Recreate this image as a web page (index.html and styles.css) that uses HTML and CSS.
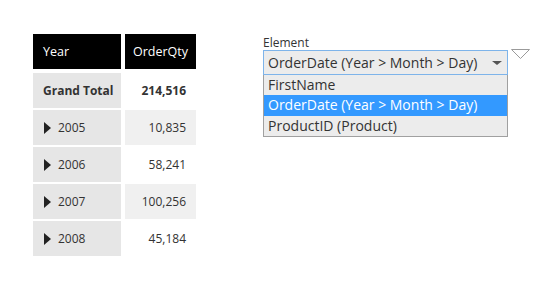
FILE: index.html
```html
<!DOCTYPE html>
<html>
<head>
<meta charset="utf-8">
<link rel="stylesheet" href="styles.css">
</head>
<body>
<div class="page">
  <div class="pivot">
    <div class="row head">
      <div class="cell hdr">Year</div>
      <div class="cell hdr val">OrderQty</div>
    </div>
    <div class="row total">
      <div class="cell lab">Grand Total</div>
      <div class="cell val">214,516</div>
    </div>
    <div class="row">
      <div class="cell lab"><span class="tri"></span>2005</div>
      <div class="cell val alt">10,835</div>
    </div>
    <div class="row">
      <div class="cell lab"><span class="tri"></span>2006</div>
      <div class="cell val">58,241</div>
    </div>
    <div class="row">
      <div class="cell lab"><span class="tri"></span>2007</div>
      <div class="cell val alt">100,256</div>
    </div>
    <div class="row">
      <div class="cell lab"><span class="tri"></span>2008</div>
      <div class="cell val">45,184</div>
    </div>
  </div>
  <div class="picker">
    <div class="label">Element</div>
    <div class="combo">
      <div class="select">
        <span>OrderDate (Year &gt; Month &gt; Day)</span>
        <span class="arrow"></span>
      </div>
      <svg class="outline" width="19" height="10" viewBox="0 0 19 10"><path d="M0.5 0.5 H18.5 L9.5 9.5 Z" fill="none" stroke="#9a9a9a" stroke-width="1"/></svg>
    </div>
    <div class="list">
      <div class="opt">FirstName</div>
      <div class="opt sel">OrderDate (Year &gt; Month &gt; Day)</div>
      <div class="opt">ProductID (Product)</div>
    </div>
  </div>
</div>
</body>
</html>
```
FILE: styles.css
```css
html, body { margin: 0; padding: 0; background: #fff; }
body { font-family: "Open Sans", "Noto Sans", sans-serif; color: #333; }
.page { display: flex; padding: 34px 0 0 33px; }
.pivot { display: flex; flex-direction: column; gap: 2px; width: 163px; }
.row { display: flex; gap: 4px; height: 35px; }
.row.head { margin-bottom: 2px; }
.cell { display: flex; align-items: center; font-size: 12px; box-sizing: border-box; }
.cell.hdr { background: #000; color: #fff; width: 88px; padding-left: 10px; font-size: 12.5px; }
.cell.hdr.val { width: 71px; padding: 0; justify-content: center; }
.cell.lab { background: #e6e6e6; width: 88px; padding-left: 10px; }
.total .cell { font-weight: bold; }
.cell.val { width: 71px; justify-content: flex-end; padding-right: 10px; }
.cell.alt { background: #f0f0f0; }
.tri { width: 0; height: 0; border-top: 6px solid transparent; border-bottom: 6px solid transparent; border-left: 7px solid #222; margin: 0 7px 0 1px; }
.picker { margin-left: 67px; margin-top: 2px; width: 245px; }
.label { font-size: 12px; color: #333; height: 14px; line-height: 14px; }
.combo { position: relative; }
.select { box-sizing: border-box; height: 25px; border: 1px solid #7eb4ea; background: #ececec; display: flex; align-items: center; justify-content: space-between; padding: 0 5px 0 4px; font-size: 14px; color: #333; }
.arrow { width: 0; height: 0; border-left: 5px solid transparent; border-right: 5px solid transparent; border-top: 4px solid #555; }
.outline { position: absolute; left: 248px; top: -1px; }
.list { box-sizing: border-box; border: 1px solid #a0a0a0; border-top: none; background: #ececec; width: 245px; }
.opt { height: 20.3px; line-height: 20px; font-size: 14px; padding-left: 4px; color: #333; }
.opt.sel { background: #3399ff; color: #fff; }
```
